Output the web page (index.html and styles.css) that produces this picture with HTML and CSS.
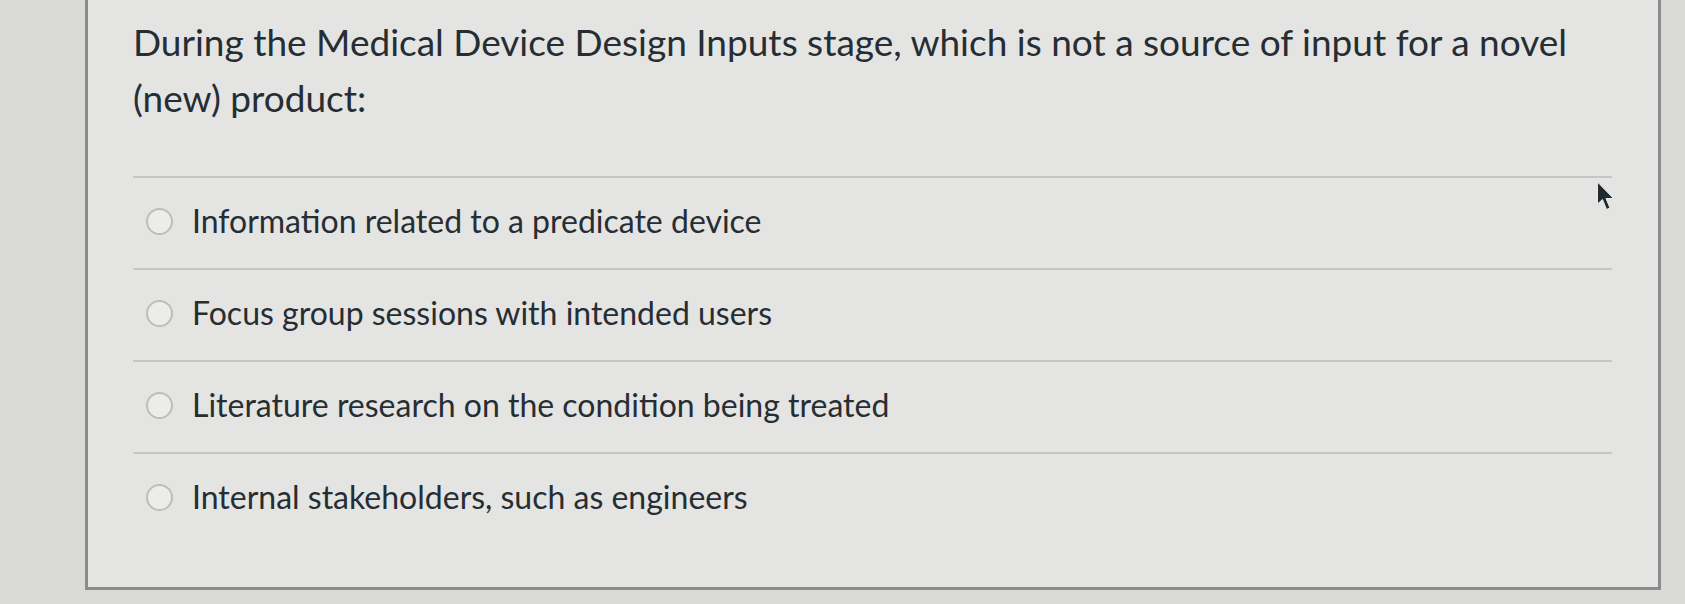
FILE: index.html
```html
<!DOCTYPE html>
<html lang="en">
<head>
<meta charset="utf-8">
<title>Quiz question</title>
<link rel="stylesheet" href="styles.css">
</head>
<body>
<div class="card">
  <p class="question">During the Medical Device Design Inputs stage, which is not a source of input for a novel (new) product:</p>
  <ul class="answers">
    <li class="answer"><span class="radio"></span><span class="label">Information related to a predicate device</span></li>
    <li class="answer"><span class="radio"></span><span class="label">Focus group sessions with intended users</span></li>
    <li class="answer"><span class="radio"></span><span class="label">Literature research on the condition being treated</span></li>
    <li class="answer"><span class="radio"></span><span class="label">Internal stakeholders, such as engineers</span></li>
  </ul>
</div>
<svg class="cursor" width="20" height="32" viewBox="0 0 20 32" aria-hidden="true">
  <path d="M1.5 1 L1.5 23 L6.5 18.5 L10.5 28.5 L14 27 L10 17.5 L17.5 17.5 Z" fill="#1f2b31" stroke="#e9ecec" stroke-width="1" stroke-linejoin="round"/>
</svg>
</body>
</html>
```

FILE: styles.css
```css
html, body {
  margin: 0;
  padding: 0;
}

body {
  background: #dadad8;
  font-family: Lato, "Open Sans", sans-serif;
  color: #262d33;
  width: 1685px;
  height: 604px;
  overflow: hidden;
  position: relative;
}

.card {
  box-sizing: border-box;
  margin-left: 85px;
  width: 1576px;
  height: 590px;
  background: #e4e4e2;
  border: 3px solid #8b8c8c;
  border-top: none;
  padding: 14px 46px 0 45px;
}

.question {
  margin: 0 0 50px;
  font-size: 37px;
  line-height: 56px;
  font-weight: 400;
  width: 1460px;
}

.answers {
  list-style: none;
  margin: 0;
  padding: 0;
}

.answer {
  box-sizing: border-box;
  height: 92px;
  border-top: 2px solid #c6c6c4;
  display: flex;
  align-items: center;
  padding: 0 0 4px 13px;
  gap: 19px;
}

.radio {
  flex: none;
  box-sizing: border-box;
  width: 27px;
  height: 27px;
  border-radius: 50%;
  border: 2px solid #bcbdbc;
  background: #ececeb;
}

.label {
  font-size: 32px;
  line-height: 40px;
}

.cursor {
  position: absolute;
  left: 1596px;
  top: 181px;
}
```
